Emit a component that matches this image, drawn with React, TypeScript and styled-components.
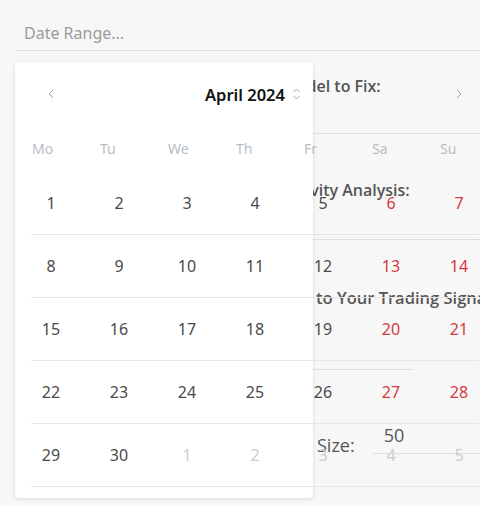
import React from "react";
import styled, { createGlobalStyle } from "styled-components";

const GlobalStyle = createGlobalStyle`
  html, body { margin: 0; padding: 0; background: #f7f7f7; }
  body { overflow: hidden; }
  * { box-sizing: border-box; }
`;

const Page = styled.div`
  position: relative;
  width: 480px;
  height: 506px;
  overflow: hidden;
  background: #f7f7f7;
  font-family: "Noto Sans", "Open Sans", sans-serif;
`;

const InputBar = styled.div`
  margin-left: 15px;
  height: 51px;
  padding: 22px 0 0 9px;
  border-bottom: 1px solid #dedede;
  font-size: 16px;
  line-height: 22px;
  color: #9b9b9b;
`;

const BgForm = styled.div`
  display: flex;
  flex-direction: column;
  padding-left: 170px;
  font-family: "Open Sans", sans-serif;
  color: #555;
`;

const Label = styled.div<{ $indent: number; $top: number; $size?: number }>`
  margin-top: ${(p) => p.$top}px;
  padding-left: ${(p) => p.$indent}px;
  font-size: ${(p) => p.$size ?? 16}px;
  font-weight: 600;
  line-height: 24px;
  white-space: nowrap;
`;

const Field = styled.div<{ $height: number; $width?: number }>`
  height: ${(p) => p.$height}px;
  width: ${(p) => (p.$width ? `${p.$width}px` : "auto")};
  border-bottom: 1px solid #dedede;
`;

const SizeRow = styled.div`
  display: flex;
  align-items: flex-start;
  margin-top: 50px;
  padding-left: 147px;
`;

const SizeLabel = styled.div`
  font-size: 18px;
  line-height: 24px;
  padding-top: 13px;
`;

const SizeInput = styled.div`
  margin-left: 18px;
  flex: 1;
  height: 34px;
  padding: 3px 0 0 11px;
  border-bottom: 1px solid #dedede;
  font-size: 18px;
  line-height: 24px;
`;

const Popup = styled.div`
  position: absolute;
  top: 62px;
  left: 15px;
  width: 298px;
  height: 436px;
  background: #fff;
  border-radius: 4px;
  box-shadow: 0 1px 4px rgba(0, 0, 0, 0.12);
  padding-left: 16px;
`;

const Calendar = styled.div`
  width: 448px;
`;

const Header = styled.div`
  display: flex;
  align-items: center;
  height: 64px;
`;

const NavButton = styled.div`
  width: 40px;
  display: flex;
  justify-content: center;
  align-items: center;
`;

const Title = styled.div`
  flex: 1;
  display: flex;
  justify-content: center;
  align-items: center;
  gap: 7px;
  padding-right: 4px;
  font-size: 16.5px;
  font-weight: 600;
  color: #111;
`;

const Grid = styled.div`
  display: grid;
  grid-template-columns: repeat(7, 40px);
  column-gap: 28px;
`;

const WeekRow = styled(Grid)`
  height: 46px;
  padding-bottom: 2px;
  align-items: center;
`;

const WeekDay = styled.div`
  padding-left: 1px;
  font-size: 14px;
  color: #b9bdc5;
`;

const DayRow = styled(Grid)`
  height: 63px;
  align-items: center;
  border-bottom: 1px solid #e6e6e6;
`;

const Day = styled.div<{ $tone: "normal" | "weekend" | "muted" }>`
  text-align: center;
  font-size: 16px;
  color: ${(p) =>
    p.$tone === "weekend" ? "#d8373f" : p.$tone === "muted" ? "#cdcdcd" : "#4a4a4a"};
`;

const Chevron = ({ dir }: { dir: "left" | "right" }) => (
  <svg width="8" height="12" viewBox="0 0 8 12">
    <polyline
      points={dir === "left" ? "6,2 2,6 6,10" : "2,2 6,6 2,10"}
      fill="none"
      stroke="#a3a3a3"
      strokeWidth="1"
    />
  </svg>
);

const UpDown = () => (
  <svg width="9" height="16" viewBox="0 0 9 16">
    <polyline points="1.5,6 4.5,3 7.5,6" fill="none" stroke="#a8a8a8" strokeWidth="1" />
    <polyline points="1.5,10 4.5,13 7.5,10" fill="none" stroke="#a8a8a8" strokeWidth="1" />
  </svg>
);

const weekdays = ["Mo", "Tu", "We", "Th", "Fr", "Sa", "Su"];

type Cell = { n: number; muted?: boolean };

const weeks: Cell[][] = [];
{
  let d = 1;
  for (let w = 0; w < 5; w++) {
    const row: Cell[] = [];
    for (let i = 0; i < 7; i++) {
      if (d <= 30) row.push({ n: d });
      else row.push({ n: d - 30, muted: true });
      d++;
    }
    weeks.push(row);
  }
}

export default function App() {
  return (
    <>
      <GlobalStyle />
      <Page>
        <InputBar>Date Range...</InputBar>
        <BgForm>
          <Label $top={23} $indent={112}>Model to Fix:</Label>
          <Field $height={36} />
          <Label $top={44} $indent={89}>Sensitivity Analysis:</Label>
          <Field $height={38} />
          <Label $top={46} $indent={11} $size={16.5}>Apply Sensitivity to Your Trading Signal</Label>
          <Field $height={60} $width={243} />
          <SizeRow>
            <SizeLabel>Size:</SizeLabel>
            <SizeInput>50</SizeInput>
          </SizeRow>
        </BgForm>
        <Popup>
          <Calendar>
            <Header>
              <NavButton>
                <Chevron dir="left" />
              </NavButton>
              <Title>
                April 2024
                <UpDown />
              </Title>
              <NavButton>
                <Chevron dir="right" />
              </NavButton>
            </Header>
            <WeekRow>
              {weekdays.map((w) => (
                <WeekDay key={w}>{w}</WeekDay>
              ))}
            </WeekRow>
            {weeks.map((row, r) => (
              <DayRow key={r}>
                {row.map((c, i) => (
                  <Day
                    key={i}
                    $tone={c.muted ? "muted" : i >= 5 ? "weekend" : "normal"}
                  >
                    {c.n}
                  </Day>
                ))}
              </DayRow>
            ))}
          </Calendar>
        </Popup>
      </Page>
    </>
  );
}
